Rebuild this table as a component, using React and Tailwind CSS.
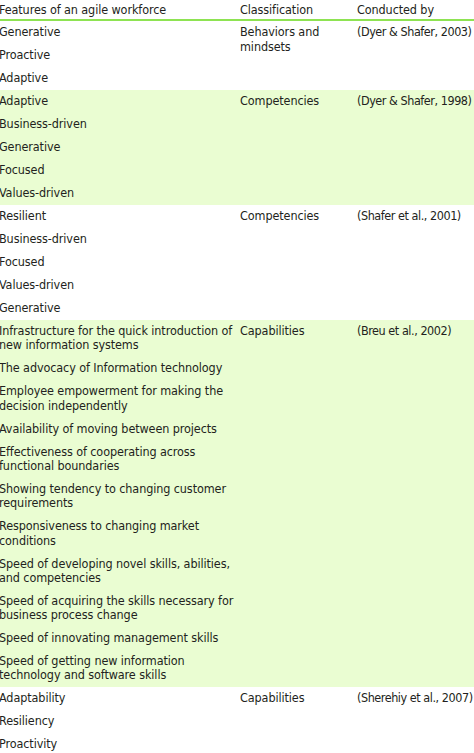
const groups = [
  {
    bg: "bg-white",
    features: [["Generative"], ["Proactive"], ["Adaptive"]],
    classification: ["Behaviors and", "mindsets"],
    by: "(Dyer & Shafer, 2003)",
  },
  {
    bg: "bg-[#eafdd2]",
    features: [["Adaptive"], ["Business-driven"], ["Generative"], ["Focused"], ["Values-driven"]],
    classification: ["Competencies"],
    by: "(Dyer & Shafer, 1998)",
  },
  {
    bg: "bg-white",
    features: [["Resilient"], ["Business-driven"], ["Focused"], ["Values-driven"], ["Generative"]],
    classification: ["Competencies"],
    by: "(Shafer et al., 2001)",
  },
  {
    bg: "bg-[#eafdd2]",
    features: [
      ["Infrastructure for the quick introduction of", "new information systems"],
      ["The advocacy of Information technology"],
      ["Employee empowerment for making the", "decision independently"],
      ["Availability of moving between projects"],
      ["Effectiveness of cooperating across", "functional boundaries"],
      ["Showing tendency to changing customer", "requirements"],
      ["Responsiveness to changing market", "conditions"],
      ["Speed of developing novel skills, abilities,", "and competencies"],
      ["Speed of acquiring the skills necessary for", "business process change"],
      ["Speed of innovating management skills"],
      ["Speed of getting new information", "technology and software skills"],
    ],
    classification: ["Capabilities"],
    by: "(Breu et al., 2002)",
  },
  {
    bg: "bg-white",
    features: [["Adaptability"], ["Resiliency"], ["Proactivity"]],
    classification: ["Capabilities"],
    by: "(Sherehiy et al., 2007)",
  },
];

export default function App() {
  return (
    <div
      className="w-[474px] h-[753px] overflow-hidden bg-white text-[#231f20] text-[12.5px] tracking-[-0.1px]"
      style={{ fontFamily: '"DejaVu Sans Condensed", "Liberation Sans", sans-serif' }}
    >
      <div className="grid grid-cols-[237px_117px_1fr] h-[21px] items-center border-b-2 border-[#8ee352] leading-[15px]">
        <div className="-ml-px whitespace-nowrap">Features of an agile workforce</div>
        <div className="pl-[3px]">Classification</div>
        <div className="pl-[3px]">Conducted by</div>
      </div>
      {groups.map((g, i) => (
        <div key={i} className={`grid grid-cols-[237px_117px_1fr] ${g.bg} leading-[14.3px]`}>
          <div className="flex flex-col -ml-px">
            {g.features.map((f, j) => (
              <div key={j} className="py-[4.35px] whitespace-nowrap">
                {f.map((line, k) => (
                  <div key={k}>{line}</div>
                ))}
              </div>
            ))}
          </div>
          <div className="pl-[3px] py-[4.35px] whitespace-nowrap">
            {g.classification.map((line, k) => (
              <div key={k}>{line}</div>
            ))}
          </div>
          <div className="pl-[3px] py-[4.35px] whitespace-nowrap tracking-[-0.45px]">{g.by}</div>
        </div>
      ))}
    </div>
  );
}
